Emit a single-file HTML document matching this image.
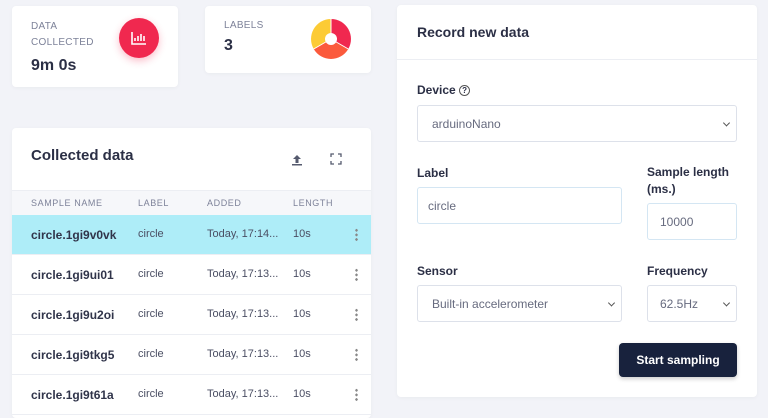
<!DOCTYPE html>
<html><head><style>
*{box-sizing:border-box;margin:0;padding:0}
body{width:768px;height:404px;overflow:hidden;background:#f2f3f8;font-family:"Liberation Sans",sans-serif;color:#2b2f45;position:relative}
.card{position:absolute;background:#fff;border-radius:4px;box-shadow:0 1px 4px rgba(0,0,0,.04)}
.abs{position:absolute}
.sm{font-size:10px;color:#7d8299;letter-spacing:.3px;line-height:16px}
.row{position:absolute;left:0;width:359px;height:40px;border-bottom:1px solid #eceef3;font-size:11px}
.row span{position:absolute;top:13px}
.row .n{left:19px;font-weight:bold;font-size:12px;color:#30344a}
.row .l{left:126px;color:#4a4e63}
.row .a{left:195px;color:#4a4e63}
.row .s{left:281px;color:#4a4e63}
.row .d{left:343px;top:12px;width:3px;height:14px;background:radial-gradient(circle,#888 1.2px,transparent 1.4px) 0 0/3px 4.6px repeat-y}
.lbl{position:absolute;font-size:12px;font-weight:bold;color:#2b2f45}
.inp{position:absolute;border:1px solid #dde1ea;border-radius:3px;font-size:12px;color:#676b7f;padding-left:12px;display:flex;align-items:center}
.inp.f{border-color:#d4e6f3}
.chev{position:absolute;right:7px;top:50%;width:5px;height:5px;border-right:1.3px solid #555;border-bottom:1.3px solid #555;transform:translateY(-70%) rotate(45deg)}
</style></head><body>
<div class="card" style="left:12px;top:6px;width:166px;height:81px">
 <div class="abs sm" style="left:19px;top:13px">DATA<br>COLLECTED</div>
 <div class="abs" style="left:19px;top:51px;font-size:16px;font-weight:bold;color:#2b2f45">9m 0s</div>
 <div class="abs" style="left:107px;top:12px;width:40px;height:40px;border-radius:50%;background:#f0284f;box-shadow:0 3px 8px rgba(240,40,79,.3)">
  <svg width="40" height="40" viewBox="0 0 40 40"><path d="M13 14v12h14" stroke="#fff" stroke-width="1.6" fill="none"/><path d="M16 23v-3M19 23v-5M22 23v-7M25 23v-5" stroke="#fff" stroke-width="1.6"/></svg>
 </div>
</div>
<div class="card" style="left:205px;top:6px;width:166px;height:67px">
 <div class="abs sm" style="left:19px;top:12px">LABELS</div>
 <div class="abs" style="left:19px;top:31px;font-size:16px;font-weight:bold">3</div>
 <svg class="abs" style="left:105px;top:12px" width="42" height="42" viewBox="-21 -21 42 42">
  <path d="M0 0L0 -20A20 20 0 0 1 17.3 10Z" fill="#f0284f"/>
  <path d="M0 0L17.3 10A20 20 0 0 1 -17.3 10Z" fill="#fb5a3c"/>
  <path d="M0 0L-17.3 10A20 20 0 0 1 0 -20Z" fill="#fccb35"/>
  <circle r="6" fill="#fff"/><path d="M0 0V-20M0 0L17.3 10M0 0L-17.3 10" stroke="#fff" stroke-width="1"/>
 </svg>
</div>
<div class="card" style="left:12px;top:128px;width:359px;height:290px;overflow:hidden">
 <div class="abs" style="left:19px;top:19px;font-size:15px;font-weight:bold;color:#2b2f45">Collected data</div>
 <svg class="abs" style="left:278px;top:25px" width="14" height="14" viewBox="0 0 14 14"><path d="M7 2L3 6h2.5v4h3V6H11z M2 11h10v1.5H2z" fill="#555a6e"/></svg>
 <svg class="abs" style="left:318px;top:25px" width="12" height="12" viewBox="0 0 12 12"><path d="M1 4V1h3M8 1h3v3M11 8v3H8M4 11H1V8" stroke="#555a6e" stroke-width="1.3" fill="none"/></svg>
 <div class="abs" style="left:0;top:62px;width:359px;height:25px;background:#f6f7fa;border-top:1px solid #eceef3;font-size:9px;color:#7d8299;letter-spacing:.6px">
  <span class="abs" style="left:19px;top:7px">SAMPLE NAME</span><span class="abs" style="left:126px;top:7px">LABEL</span><span class="abs" style="left:195px;top:7px">ADDED</span><span class="abs" style="left:281px;top:7px">LENGTH</span>
 </div>
 <div class="row" style="top:87px;background:#aeedf8"><span class="n">circle.1gi9v0vk</span><span class="l">circle</span><span class="a">Today, 17:14...</span><span class="s">10s</span><i class="abs d" style="left:343px;top:13px"></i></div>
 <div class="row" style="top:127px"><span class="n">circle.1gi9ui01</span><span class="l">circle</span><span class="a">Today, 17:13...</span><span class="s">10s</span><i class="abs d" style="left:343px;top:13px"></i></div>
 <div class="row" style="top:167px"><span class="n">circle.1gi9u2oi</span><span class="l">circle</span><span class="a">Today, 17:13...</span><span class="s">10s</span><i class="abs d" style="left:343px;top:13px"></i></div>
 <div class="row" style="top:207px"><span class="n">circle.1gi9tkg5</span><span class="l">circle</span><span class="a">Today, 17:13...</span><span class="s">10s</span><i class="abs d" style="left:343px;top:13px"></i></div>
 <div class="row" style="top:247px"><span class="n">circle.1gi9t61a</span><span class="l">circle</span><span class="a">Today, 17:13...</span><span class="s">10s</span><i class="abs d" style="left:343px;top:13px"></i></div>
</div>
<div class="card" style="left:397px;top:5px;width:360px;height:392px">
 <div class="abs" style="left:20px;top:19px;font-size:14px;font-weight:bold">Record new data</div>
 <div class="abs" style="left:0;top:54px;width:360px;border-top:1px solid #eceef3"></div>
 <div class="lbl" style="left:20px;top:78px">Device <span style="display:inline-block;width:11px;height:11px;border:1.2px solid #555;border-radius:50%;font-size:8px;text-align:center;line-height:9px;vertical-align:1px">?</span></div>
 <div class="inp" style="left:20px;top:100px;width:320px;height:37px;padding-left:14px">arduinoNano<i class="chev"></i></div>
 <div class="lbl" style="left:20px;top:161px">Label</div>
 <div class="inp f" style="left:20px;top:182px;width:205px;height:37px;padding-left:10px">circle</div>
 <div class="lbl" style="left:250px;top:159px;line-height:17px">Sample length<br>(ms.)</div>
 <div class="inp f" style="left:250px;top:198px;width:90px;height:37px">10000</div>
 <div class="lbl" style="left:20px;top:259px">Sensor</div>
 <div class="inp" style="left:20px;top:280px;width:205px;height:37px;padding-left:14px">Built-in accelerometer<i class="chev"></i></div>
 <div class="lbl" style="left:250px;top:259px">Frequency</div>
 <div class="inp" style="left:250px;top:280px;width:90px;height:37px">62.5Hz<i class="chev"></i></div>
 <div class="abs" style="left:222px;top:338px;width:118px;height:34px;background:#18223d;border-radius:4px;color:#fff;font-size:12px;font-weight:bold;display:flex;align-items:center;justify-content:center;box-shadow:0 2px 4px rgba(0,0,0,.2)">Start sampling</div>
</div>
</body></html>
